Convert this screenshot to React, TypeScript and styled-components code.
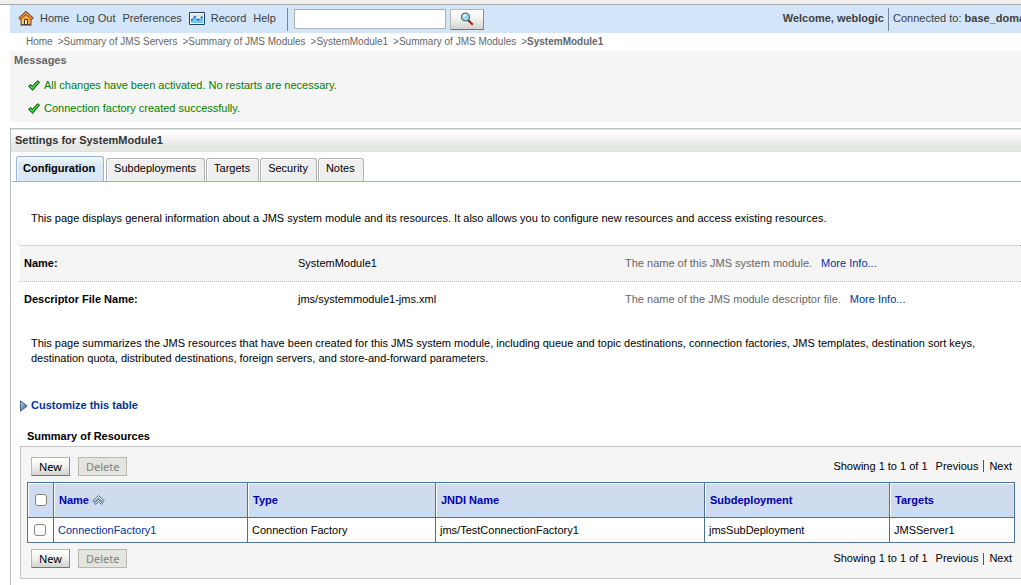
import React from "react";
import styled, { createGlobalStyle, css } from "styled-components";

const GlobalStyle = createGlobalStyle`
  * { box-sizing: border-box; }
  body {
    margin: 0;
    background: #fff;
    color: #000;
    font: 11px/15px "Liberation Sans", Arial, sans-serif;
    overflow-x: hidden;
  }
  a { text-decoration: none; }
`;

const WindowEdge = styled.div`
  height: 5px;
  background: #f0efee;
  border-bottom: 1px solid #aaa8a5;
`;

const Page = styled.div`
  padding-left: 10px;
`;

const Banner = styled.header`
  display: flex;
  align-items: center;
  height: 28px;
  padding-left: 8px;
  background: #d3e5f9;
  color: #404040;
  white-space: nowrap;
`;

const Menu = styled.nav`
  display: flex;
  align-items: center;
  gap: 7px;
  padding: 0 11px 2px 0;

  a {
    color: inherit;
  }

  svg {
    display: block;
    margin-right: -1px;
  }
`;

const Divider = styled.span`
  width: 1px;
  height: 23px;
  background: #7b8794;
`;

const Search = styled.form`
  display: flex;
  align-items: center;
  gap: 4px;
  margin: 0 auto 0 6px;
`;

const SearchInput = styled.input`
  width: 152px;
  height: 20px;
  padding: 0 4px;
  border: 1px solid #b0b0ac;
  background: #fff;
  font: inherit;
`;

const raised = css`
  border: 1px solid #b8b8b0;
  border-right-color: #888880;
  border-bottom-color: #777770;
  background: linear-gradient(#ffffff, #f3f3f0 45%, #d2d3cd);
`;

const SearchButton = styled.button`
  display: flex;
  align-items: center;
  justify-content: center;
  width: 34px;
  height: 21px;
  padding: 0;
  ${raised}
`;

const Welcome = styled.strong`
  padding: 0 4px 2px 0;
`;

const Connection = styled.span`
  width: 132px;
  padding: 0 0 2px 4px;
  overflow: hidden;
`;

const Breadcrumbs = styled.nav`
  display: flex;
  height: 18px;
  padding: 1px 0 0 16px;
  color: #666;
  font-size: 10px;
  white-space: nowrap;

  a {
    margin-right: 5px;
    color: inherit;
  }
`;

const Messages = styled.section`
  height: 71px;
  padding: 2px 4px;
  background: #f5f5f5;
`;

const MessagesTitle = styled.h2`
  margin: 0 0 10px;
  color: #666;
  font-size: 11px;
  line-height: 15px;
`;

const Message = styled.p`
  display: flex;
  align-items: center;
  gap: 4px;
  height: 15px;
  margin: 0 0 8px;
  padding-left: 14px;
  color: #008000;
`;

const Settings = styled.main`
  margin-top: 6px;
  padding-bottom: 6px;
  border-top: 1px solid #b8c0c4;
  border-left: 1px solid #b8c0c4;
`;

const SettingsTitle = styled.h1`
  height: 23px;
  margin: 0;
  padding: 3px 4px;
  border-top: 1px solid #e4e6e6;
  border-bottom: 1px solid #dcdfdc;
  background: linear-gradient(#fff, #f6f6f6 35%, #e6e8e5 75%);
  color: #333;
  font-size: 11px;
  line-height: 15px;
`;

const Tabs = styled.div`
  display: flex;
  align-items: flex-end;
  gap: 1px;
  height: 30px;
  margin-left: 1px;
  padding-left: 4px;
  border-bottom: 1px solid #9bb3d3;
`;

const Tab = styled.button<{ $active?: boolean }>`
  height: 23px;
  padding: 0 8px 3px 7px;
  border: 1px solid #b3b3b3;
  border-bottom: 0;
  border-radius: 3px 3px 0 0;
  background: #efefef;
  color: #000;
  font: inherit;
  box-shadow: inset 1px 1px #fafafa;

  ${({ $active }) =>
    $active &&
    css`
      height: 25px;
      padding: 0 8px 1px 6px;
      margin-right: 1px;
      border-color: #9bb3d3;
      background: linear-gradient(#f1f7fb, #d8e7f2 35%, #dce9f3);
      font-weight: bold;
    `}
`;

const Paragraph = styled.p<{ $space: number }>`
  margin: 0;
  padding: ${({ $space }) => $space}px 40px 0 20px;
`;

const Details = styled.dl`
  margin: 19px 0 0 9px;
`;

const DetailRow = styled.div<{ $shaded?: boolean }>`
  display: grid;
  grid-template-columns: 274px 327px 1fr;
  align-items: center;
  height: 36px;
  padding-left: 4px;
  border-top: 1px dotted #b8b8b8;
  background: ${({ $shaded }) => ($shaded ? "#f5f5f5" : "#fff")};

  dt {
    font-weight: bold;
  }

  dd {
    margin: 0;
  }
`;

const Hint = styled.dd`
  display: flex;
  gap: 9px;
  color: #666;
`;

const BlueLink = styled.a`
  color: #003399;
`;

const Customize = styled.a`
  display: flex;
  align-items: center;
  gap: 3px;
  margin: 32px 0 0 9px;
  color: #003399;
  font-weight: bold;
`;

const ResourcesTitle = styled.h2`
  margin: 16px 0 2px 16px;
  font-size: 11px;
  line-height: 15px;
`;

const Resources = styled.section`
  margin-left: 9px;
  padding: 0 6px;
  border: 1px solid #c4c4c4;
  border-right: 0;
  background: #f5f5f5;
`;

const Toolbar = styled.div`
  display: flex;
  align-items: center;
  gap: 8px;
  height: 35px;
  padding: 3px 3px 0 4px;

  &:last-child {
    padding: 0 3px 4px 4px;
  }
`;

const ActionButton = styled.button`
  height: 19px;
  padding: 0 7px;
  ${raised}
  color: #000;
  font: 11px/15px "Noto Sans", sans-serif;

  &:disabled {
    border-color: #b8b8b0;
    background: #e4e5de;
    color: #808080;
  }
`;

const Pager = styled.div`
  display: flex;
  align-items: center;
  margin-left: auto;

  a {
    color: #000;
  }

  a:first-of-type {
    margin-left: 8px;
    padding-right: 5px;
  }

  a:last-of-type {
    margin-left: 5px;
  }
`;

const PagerRule = styled.span`
  width: 1px;
  height: 12px;
  background: #555;
`;

const Grid = styled.table`
  width: 100%;
  table-layout: fixed;
  border-collapse: collapse;
  background: #fff;

  th,
  td {
    border: 1px solid #4f7196;
    text-align: left;
  }

  th {
    height: 35px;
    padding: 0 5px;
    background: #cfdbee;
    box-shadow: inset 1px 1px #fff;
    color: #0000aa;
  }

  td {
    height: 25px;
    padding: 0 4px;
  }

  th:first-child {
    padding: 0 0 0 7px;
  }

  td:first-child {
    padding: 0 0 0 6px;
  }

  th svg {
    margin-left: 3px;
    vertical-align: -1px;
  }
`;

const Column = styled.col<{ $width?: number }>`
  width: ${({ $width }) => ($width ? `${$width}px` : "auto")};
`;

const Check = styled.input`
  display: block;
  appearance: none;
  width: 12px;
  height: 12px;
  margin: 0;
  border: 1px solid #8b8378;
  border-radius: 3px;
  background: #fff;
`;

const HomeIcon = () => (
  <svg width="16" height="15" viewBox="0 0 16 15" aria-hidden="true">
    <path d="M3 7.5 8 3l5 4.5v6H3z" fill="#ffa63d" stroke="#6b4630" />
    <path d="M4 8v5h2V8z" fill="#ffc36b" />
    <path d="M6.5 8.5h3v5h-3z" fill="#fff0b0" stroke="#4a3428" />
    <path d="M1.2 8.2 8 1.8l6.8 6.4" fill="none" stroke="#5a4032" strokeWidth="3" />
    <path d="M1.6 7.9 8 1.9l6.4 6" fill="none" stroke="#ff9d35" strokeWidth="1.4" />
    <path d="M2 14.5h12" stroke="#8a8f94" />
  </svg>
);

const RecordIcon = () => (
  <svg width="16" height="13" viewBox="0 0 16 13" aria-hidden="true">
    <path d="M.5.5h15v12H.5z" fill="#fff" stroke="#1d4463" />
    <path d="M2 2h12v3H2z" fill="#dfe3e8" />
    <path d="M2 7.5 5 4.5l4 3L13 5l1 .5V11H2z" fill="#6cc5fb" />
    <path d="M2.5 7.5 5.500 4.500 9 7.500 13 5" fill="none" stroke="#3a98ea" strokeWidth=".8" />
    <path d="M2 7h1.500v1.500H2zM5 4h1.500v1.500H5zM8.500 7H10v1.500H8.500zM12 4.500h1.500V6H12z" fill="#0c3fb0" />
  </svg>
);

const SearchIcon = () => (
  <svg width="14" height="14" viewBox="0 0 14 14" aria-hidden="true">
    <path d="m8 8 2 2" stroke="#333" strokeWidth="2" />
    <path d="m9.5 9.5 3.3 3.3" stroke="#c51b18" strokeWidth="2" />
    <circle cx="5.5" cy="5" r="4" fill="#9bdcec" stroke="#4a6674" strokeWidth="1.2" />
    <path d="M3.5 5c0-1.5.7-2 2-2" fill="none" stroke="#fff" strokeWidth="1.5" />
  </svg>
);

const CheckIcon = () => (
  <svg width="12" height="11" viewBox="0 0 12 11" aria-hidden="true">
    <path d="m.6 6.3 1.8-1.8 2 1.7L9.7.7l1.8 1.5-6.8 8z" fill="#1fc825" stroke="#053d07" />
    <path d="m2 6 2.4 2.2L10.2 2" fill="none" stroke="#5fee58" />
  </svg>
);

const ExpandIcon = () => (
  <svg width="8" height="12" viewBox="0 0 8 12" aria-hidden="true">
    <defs>
      <linearGradient id="expand" x2="1" y2="1">
        <stop stopColor="#c5daf0" />
        <stop offset="1" stopColor="#244f82" />
      </linearGradient>
    </defs>
    <path d="M.5.8 7.2 6 .5 11.2z" fill="url(#expand)" stroke="#45688f" />
  </svg>
);

const SortIcon = () => (
  <svg width="13" height="10" viewBox="0 0 13 10" aria-hidden="true">
    <path
      d="M.7 5.7 6.500.6l5.800 5.100-1.600 1.100-4.200-3.600-4.200 3.600z"
      fill="#d9edf5"
      stroke="#34506f"
      strokeWidth=".8"
    />
    <path
      d="M2.200 8.300 6.500 4.600l4.300 3.700-1.300 1-3-2.500-3 2.500z"
      fill="#d9edf5"
      stroke="#34506f"
      strokeWidth=".8"
    />
  </svg>
);

const trail = [
  "Home",
  "Summary of JMS Servers",
  "Summary of JMS Modules",
  "SystemModule1",
  "Summary of JMS Modules",
];

const details = [
  { label: "Name:", value: "SystemModule1", hint: "The name of this JMS system module." },
  {
    label: "Descriptor File Name:",
    value: "jms/systemmodule1-jms.xml",
    hint: "The name of the JMS module descriptor file.",
  },
];

const TableControls = () => (
  <Toolbar>
    <ActionButton type="button">New</ActionButton>
    <ActionButton type="button" disabled>
      Delete
    </ActionButton>
    <Pager>
      <span>Showing 1 to 1 of 1</span>
      <a href="#previous">Previous</a>
      <PagerRule />
      <a href="#next">Next</a>
    </Pager>
  </Toolbar>
);

export default function App() {
  return (
    <>
      <GlobalStyle />
      <WindowEdge />
      <Page>
        <Banner>
          <Menu>
            <HomeIcon />
            <a href="#home">Home</a>
            <a href="#logout">Log Out</a>
            <a href="#preferences">Preferences</a>
            <RecordIcon />
            <a href="#record">Record</a>
            <a href="#help">Help</a>
          </Menu>
          <Divider />
          <Search onSubmit={(event) => event.preventDefault()}>
            <SearchInput type="text" aria-label="Search" />
            <SearchButton type="submit" aria-label="Search">
              <SearchIcon />
            </SearchButton>
          </Search>
          <Welcome>Welcome, weblogic</Welcome>
          <Divider />
          <Connection>
            Connected to: <strong>base_domain</strong>
          </Connection>
        </Banner>
        <Breadcrumbs aria-label="Breadcrumb">
          {trail.map((name, index) => (
            <React.Fragment key={index}>
              <a href="#trail">{name}</a>
              <span>&gt;</span>
            </React.Fragment>
          ))}
          <strong>SystemModule1</strong>
        </Breadcrumbs>
        <Messages>
          <MessagesTitle>Messages</MessagesTitle>
          <Message>
            <CheckIcon />
            All changes have been activated. No restarts are necessary.
          </Message>
          <Message>
            <CheckIcon />
            Connection factory created successfully.
          </Message>
        </Messages>
        <Settings>
          <SettingsTitle>Settings for SystemModule1</SettingsTitle>
          <Tabs role="tablist">
            <Tab type="button" role="tab" aria-selected $active>
              Configuration
            </Tab>
            {["Subdeployments", "Targets", "Security", "Notes"].map((name) => (
              <Tab key={name} type="button" role="tab">
                {name}
              </Tab>
            ))}
          </Tabs>
          <Paragraph $space={29}>
            This page displays general information about a JMS system module and its resources. It
            also allows you to configure new resources and access existing resources.
          </Paragraph>
          <Details>
            {details.map((detail, index) => (
              <DetailRow key={detail.label} $shaded={index % 2 === 0}>
                <dt>{detail.label}</dt>
                <dd>{detail.value}</dd>
                <Hint>
                  {detail.hint}
                  <BlueLink href="#info">More Info...</BlueLink>
                </Hint>
              </DetailRow>
            ))}
          </Details>
          <Paragraph $space={19}>
            This page summarizes the JMS resources that have been created for this JMS system
            module, including queue and topic destinations, connection factories, JMS templates,
            destination sort keys, destination quota, distributed destinations, foreign servers,
            and store-and-forward parameters.
          </Paragraph>
          <Customize href="#customize">
            <ExpandIcon />
            Customize this table
          </Customize>
          <ResourcesTitle>Summary of Resources</ResourcesTitle>
          <Resources>
            <TableControls />
            <Grid>
              <colgroup>
                <Column $width={26} />
                <Column $width={194} />
                <Column $width={188} />
                <Column $width={269} />
                <Column $width={185} />
                <Column />
              </colgroup>
              <thead>
                <tr>
                  <th>
                    <Check type="checkbox" aria-label="Select all" />
                  </th>
                  <th>
                    Name
                    <SortIcon />
                  </th>
                  <th>Type</th>
                  <th>JNDI Name</th>
                  <th>Subdeployment</th>
                  <th>Targets</th>
                </tr>
              </thead>
              <tbody>
                <tr>
                  <td>
                    <Check type="checkbox" aria-label="Select ConnectionFactory1" />
                  </td>
                  <td>
                    <BlueLink href="#factory">ConnectionFactory1</BlueLink>
                  </td>
                  <td>Connection Factory</td>
                  <td>jms/TestConnectionFactory1</td>
                  <td>jmsSubDeployment</td>
                  <td>JMSServer1</td>
                </tr>
              </tbody>
            </Grid>
            <TableControls />
          </Resources>
        </Settings>
      </Page>
    </>
  );
}
